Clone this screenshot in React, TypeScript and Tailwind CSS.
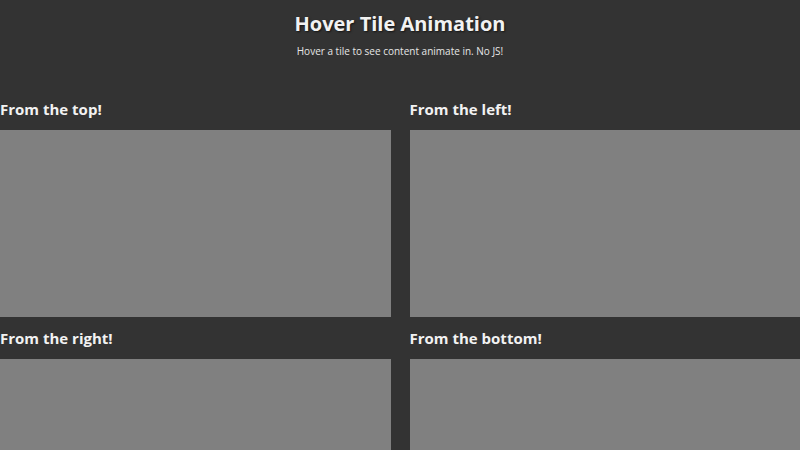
export default function App() {
  const tiles = ["From the top!", "From the left!", "From the right!", "From the bottom!"];
  return (
    <div className="min-h-[450px] bg-[#333333] text-[#f2f2f2] overflow-hidden" style={{ fontFamily: '"Open Sans", sans-serif' }}>
      <header className="pt-[10px] pb-[30px] text-center">
        <h1 className="text-[20px] leading-[28px] font-bold [text-shadow:1px_1px_2px_rgba(0,0,0,0.6)]">Hover Tile Animation</h1>
        <p className="mt-[6px] text-[10px] leading-[14px] text-[#e6e6e6]">Hover a tile to see content animate in. No JS!</p>
      </header>
      <section className="grid grid-cols-2 gap-x-[19px]">
        {tiles.map((t) => (
          <div key={t}>
            <h2 className="mt-[10px] mb-[10px] text-[15px] leading-[22px] font-bold">{t}</h2>
            <div className="h-[187px] bg-[#808080]" />
          </div>
        ))}
      </section>
    </div>
  );
}
